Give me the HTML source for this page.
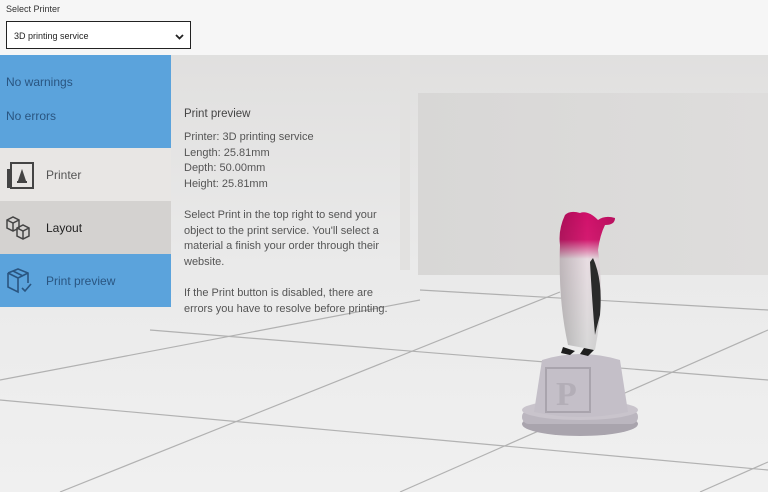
<!DOCTYPE html>
<html><head><style>
body{margin:0;width:768px;height:492px;overflow:hidden;position:relative;font-family:"Liberation Sans",sans-serif;background:#e6e5e4}
.a{position:absolute}
.t{font-size:11px;color:#555;line-height:15.5px}
</style></head><body>
<svg class="a" style="left:0;top:0" width="768" height="492">
<defs>
<linearGradient id="bg" x1="0" y1="0" x2="0" y2="1"><stop offset="0" stop-color="#dedddc"/><stop offset="0.55" stop-color="#eaeaea"/><stop offset="1" stop-color="#f0f0f0"/></linearGradient>
<linearGradient id="wall" x1="0" y1="0" x2="1" y2="0"><stop offset="0" stop-color="#d8d7d6"/><stop offset="1" stop-color="#dedddc"/></linearGradient>
<linearGradient id="pk" gradientUnits="userSpaceOnUse" x1="0" y1="212" x2="0" y2="350"><stop offset="0" stop-color="#d0106a"/><stop offset="0.2" stop-color="#d41a70"/><stop offset="0.34" stop-color="#e8dde2"/><stop offset="1" stop-color="#d8d8d8"/></linearGradient>
<linearGradient id="sh" x1="0" y1="0" x2="1" y2="0"><stop offset="0" stop-color="#000" stop-opacity="0.18"/><stop offset="0.5" stop-color="#000" stop-opacity="0"/><stop offset="1" stop-color="#000" stop-opacity="0.12"/></linearGradient>
</defs>
<rect width="768" height="492" fill="url(#bg)"/>
<rect x="418" y="93" width="350" height="182" fill="url(#wall)"/>
<rect x="400" y="55" width="10" height="215" fill="#e2e1e0"/>
<g stroke="#8a8a8a" stroke-width="1.2" fill="none" opacity="0.6">
<path d="M0 380 L420 300"/><path d="M60 492 L560 292"/><path d="M400 492 L768 330"/><path d="M700 492 L768 462"/>
<path d="M150 330 L768 380"/><path d="M0 400 L768 470"/><path d="M420 290 L768 310"/>
</g>
<ellipse cx="580" cy="424" rx="58" ry="12" fill="#a9a4ad"/>
<rect x="522" y="410" width="116" height="14" rx="7" fill="#bbb6bf"/>
<ellipse cx="580" cy="410" rx="58" ry="10" fill="#c9c4cc"/>
<path d="M542 360 Q580 348 620 360 L628 412 Q580 422 534 412 Z" fill="#c4bfc8"/>
<rect x="546" y="368" width="44" height="44" fill="none" stroke="#a9a4ad" stroke-width="2"/>
<text x="556" y="405" font-size="34" font-weight="bold" fill="#b3aeb7" font-family="Liberation Serif">P</text>
<path id="pg" d="M565 215 Q558 230 560 245 Q558 300 568 345 L595 350 Q605 300 598 250 Q600 235 605 225 Q615 225 615 218 Q605 215 598 220 Q588 210 580 213 Q570 210 565 215 Z" fill="url(#pk)"/>
<path d="M565 215 Q558 230 560 245 Q558 300 568 345 L595 350 Q605 300 598 250 Q600 235 605 225 Q615 225 615 218 Q605 215 598 220 Q588 210 580 213 Q570 210 565 215 Z" fill="url(#sh)"/>
<path d="M593 258 Q603 280 600 315 Q596 330 595 335 Q592 300 590 262 Z" fill="#2a2a2a"/>
<path d="M563 347 L575 351 L570 355 L561 353 Z M584 348 L594 350 L588 356 L580 354 Z" fill="#1e1e1e"/>
</svg>
<div class="a" style="left:0;top:0;width:768px;height:55px;background:#f6f6f6"></div>
<div class="a" style="left:6px;top:4px;font-size:9px;color:#333">Select Printer</div>
<div class="a" style="left:6px;top:21px;width:185px;height:28px;border:1.5px solid #222;background:#fff;box-sizing:border-box"></div>
<div class="a" style="left:14px;top:31px;font-size:9px;color:#222">3D printing service</div>
<svg class="a" style="left:175px;top:34px" width="9" height="6"><path d="M1 1 L4.5 4.5 L8 1" stroke="#222" stroke-width="1.8" fill="none"/></svg>
<div class="a" style="left:0;top:55px;width:171px;height:93px;background:#5ba3dc"></div>
<div class="a" style="left:6px;top:75px;font-size:12px;color:#2a5580">No warnings</div>
<div class="a" style="left:6px;top:109px;font-size:12px;color:#2a5580">No errors</div>
<div class="a" style="left:0;top:148px;width:171px;height:53px;background:#e8e6e4"></div>
<div class="a" style="left:0;top:201px;width:171px;height:53px;background:#d4d2d0"></div>
<div class="a" style="left:0;top:254px;width:171px;height:53px;background:#5ba3dc"></div>
<svg class="a" style="left:5px;top:161px" width="30" height="30"><rect x="6" y="2" width="22" height="25" fill="none" stroke="#444" stroke-width="2"/><rect x="2" y="8" width="5" height="19" fill="#444"/><path d="M14 20 L17 11 L20 20 Z M12 21 H22" stroke="#444" stroke-width="2" fill="#444"/></svg>
<div class="a" style="left:46px;top:168px;font-size:12px;color:#555">Printer</div>
<svg class="a" style="left:5px;top:214px" width="30" height="30" fill="none" stroke="#444" stroke-width="1.5"><path d="M2 6 L8 3 L14 6 L14 14 L8 17 L2 14 Z M2 6 L8 9 L14 6 M8 9 V17"/><path d="M12 14 L18 11 L24 14 L24 22 L18 25 L12 22 Z M12 14 L18 17 L24 14 M18 17 V25"/></svg>
<div class="a" style="left:46px;top:221px;font-size:12px;color:#222">Layout</div>
<svg class="a" style="left:5px;top:266px" width="30" height="30" fill="none" stroke="#2a5580" stroke-width="1.6"><path d="M3 7 L13 3 L23 7 L23 17 M3 7 L3 21 L13 26 L13 12 L23 7 M3 7 L13 12 M8 5 L18 10"/><path d="M17 22 L20 25 L26 18"/></svg>
<div class="a" style="left:46px;top:274px;font-size:12px;color:#2a5580">Print preview</div>
<div class="a" style="left:184px;top:108px;font-size:11.5px;color:#444">Print preview</div>
<div class="a t" style="left:184px;top:130px">Printer: 3D printing service<br>Length: 25.81mm<br>Depth: 50.00mm<br>Height: 25.81mm</div>
<div class="a t" style="left:184px;top:208px">Select Print in the top right to send your<br>object to the print service. You'll select a<br>material a finish your order through their<br>website.</div>
<div class="a t" style="left:184px;top:286px">If the Print button is disabled, there are<br>errors you have to resolve before printing.</div>
</body></html>
